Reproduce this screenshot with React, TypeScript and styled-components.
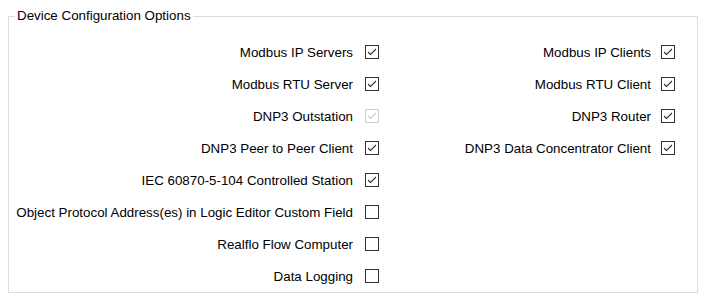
import styled, { createGlobalStyle } from "styled-components"

const GlobalStyle = createGlobalStyle`
  html, body {
    margin: 0;
    padding: 0;
    background: #ffffff;
  }
  body {
    font-family: "Liberation Sans", Arial, sans-serif;
    font-size: 13.35px;
    color: #000000;
  }
`

type Option = { label: string; checked: boolean; disabled?: boolean }

const leftOptions: Option[] = [
  { label: "Modbus IP Servers", checked: true },
  { label: "Modbus RTU Server", checked: true },
  { label: "DNP3 Outstation", checked: true, disabled: true },
  { label: "DNP3 Peer to Peer Client", checked: true },
  { label: "IEC 60870-5-104 Controlled Station", checked: true },
  { label: "Object Protocol Address(es) in Logic Editor Custom Field", checked: false },
  { label: "Realflo Flow Computer", checked: false },
  { label: "Data Logging", checked: false },
]

const rightOptions: Option[] = [
  { label: "Modbus IP Clients", checked: true },
  { label: "Modbus RTU Client", checked: true },
  { label: "DNP3 Router", checked: true },
  { label: "DNP3 Data Concentrator Client", checked: true },
]

const Page = styled.div`
  padding: 8px 8px 0 8px;
`

const GroupBox = styled.fieldset`
  margin: 0;
  width: 690px;
  height: 285px;
  box-sizing: border-box;
  border: 1px solid #dcdcdc;
  padding: 12px 0 0 0;
`

const Legend = styled.legend`
  margin-left: 6px;
  padding: 0 2px;
  line-height: 16px;
`

const Columns = styled.div`
  display: flex;
`

const Column = styled.div<{ $width: number }>`
  display: flex;
  flex-direction: column;
  width: ${(p) => p.$width}px;
`

const Row = styled.label<{ $gap: number }>`
  display: flex;
  align-items: center;
  justify-content: flex-end;
  height: 32px;
  gap: ${(p) => p.$gap}px;
  white-space: nowrap;
`

const Box = styled.span<{ $disabled?: boolean }>`
  display: inline-flex;
  width: 14px;
  height: 14px;
  box-sizing: border-box;
  border: 1px solid ${(p) => (p.$disabled ? "#cccccc" : "#333333")};
  background: #ffffff;
  flex: none;
`

const Check = ({ checked, disabled }: { checked: boolean; disabled?: boolean }) => (
  <Box $disabled={disabled}>
    {checked && (
      <svg width="12" height="12" viewBox="0 0 12 12">
        <path
          d="M2 6 L4.5 8.5 L10 3"
          fill="none"
          stroke={disabled ? "#cccccc" : "#333333"}
          strokeWidth="1.1"
        />
      </svg>
    )}
  </Box>
)

const OptionList = ({ items, width, gap }: { items: Option[]; width: number; gap: number }) => (
  <Column $width={width}>
    {items.map((o) => (
      <Row key={o.label} $gap={gap}>
        <span>{o.label}</span>
        <Check checked={o.checked} disabled={o.disabled} />
      </Row>
    ))}
  </Column>
)

export default function App() {
  return (
    <>
      <GlobalStyle />
      <Page>
        <GroupBox>
          <Legend>Device Configuration Options</Legend>
          <Columns>
            <OptionList items={leftOptions} width={370} gap={12} />
            <OptionList items={rightOptions} width={296} gap={10} />
          </Columns>
        </GroupBox>
      </Page>
    </>
  )
}
